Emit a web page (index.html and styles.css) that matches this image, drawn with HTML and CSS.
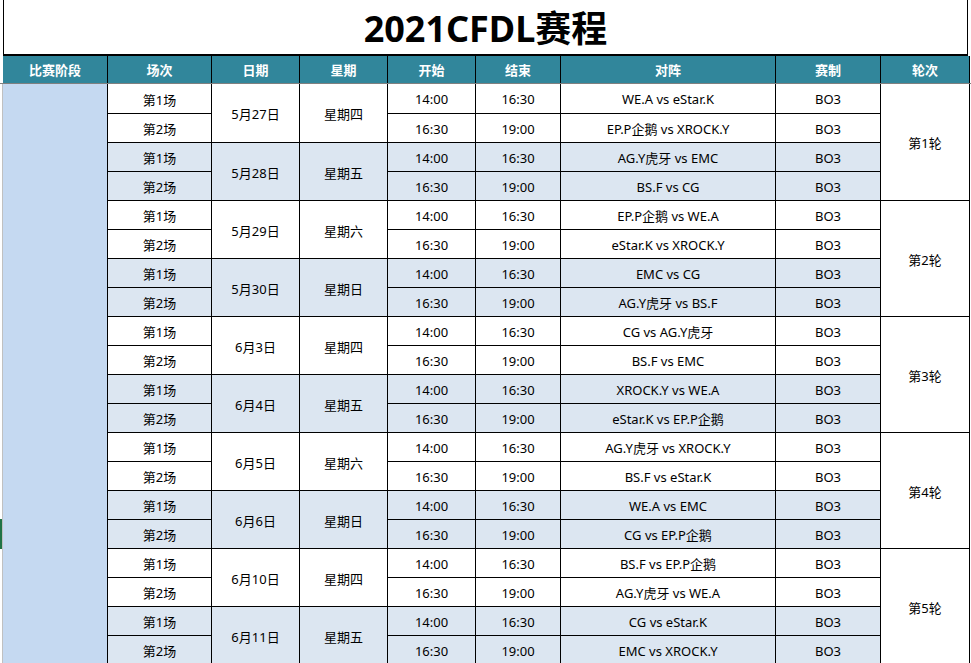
FILE: index.html
```html
<!DOCTYPE html>
<html lang="zh-CN">
<head>
<meta charset="utf-8">
<title>2021CFDL赛程</title>
<link rel="stylesheet" href="styles.css">
</head>
<body>
<div class="page">
  <div class="title-row">
    <div class="title">2021CFDL赛程</div>
  </div>
  <div class="head-row">
    <div class="head">
      <div class="h">比赛阶段</div>
      <div class="h">场次</div>
      <div class="h">日期</div>
      <div class="h">星期</div>
      <div class="h">开始</div>
      <div class="h">结束</div>
      <div class="h">对阵</div>
      <div class="h">赛制</div>
      <div class="h">轮次</div>
    </div>
  </div>
  <div class="body-row">
    <div class="gutter"><div class="sel"></div></div>
    <div class="grid">
      <div class="stage"></div>

      <div class="c g">第1场</div><div class="c d">5月27日</div><div class="c w">星期四</div><div class="c s">14:00</div><div class="c e">16:30</div><div class="c m">WE.A vs eStar.K</div><div class="c f">BO3</div><div class="c r">第1轮</div>
      <div class="c g">第2场</div><div class="c s">16:30</div><div class="c e">19:00</div><div class="c m">EP.P企鹅 vs XROCK.Y</div><div class="c f">BO3</div>

      <div class="c g b">第1场</div><div class="c d b">5月28日</div><div class="c w b">星期五</div><div class="c s b">14:00</div><div class="c e b">16:30</div><div class="c m b">AG.Y虎牙 vs EMC</div><div class="c f b">BO3</div>
      <div class="c g b">第2场</div><div class="c s b">16:30</div><div class="c e b">19:00</div><div class="c m b">BS.F vs CG</div><div class="c f b">BO3</div>

      <div class="c g">第1场</div><div class="c d">5月29日</div><div class="c w">星期六</div><div class="c s">14:00</div><div class="c e">16:30</div><div class="c m">EP.P企鹅 vs WE.A</div><div class="c f">BO3</div><div class="c r">第2轮</div>
      <div class="c g">第2场</div><div class="c s">16:30</div><div class="c e">19:00</div><div class="c m">eStar.K vs XROCK.Y</div><div class="c f">BO3</div>

      <div class="c g b">第1场</div><div class="c d b">5月30日</div><div class="c w b">星期日</div><div class="c s b">14:00</div><div class="c e b">16:30</div><div class="c m b">EMC vs CG</div><div class="c f b">BO3</div>
      <div class="c g b">第2场</div><div class="c s b">16:30</div><div class="c e b">19:00</div><div class="c m b">AG.Y虎牙 vs BS.F</div><div class="c f b">BO3</div>

      <div class="c g">第1场</div><div class="c d">6月3日</div><div class="c w">星期四</div><div class="c s">14:00</div><div class="c e">16:30</div><div class="c m">CG vs AG.Y虎牙</div><div class="c f">BO3</div><div class="c r">第3轮</div>
      <div class="c g">第2场</div><div class="c s">16:30</div><div class="c e">19:00</div><div class="c m">BS.F vs EMC</div><div class="c f">BO3</div>

      <div class="c g b">第1场</div><div class="c d b">6月4日</div><div class="c w b">星期五</div><div class="c s b">14:00</div><div class="c e b">16:30</div><div class="c m b">XROCK.Y vs WE.A</div><div class="c f b">BO3</div>
      <div class="c g b">第2场</div><div class="c s b">16:30</div><div class="c e b">19:00</div><div class="c m b">eStar.K vs EP.P企鹅</div><div class="c f b">BO3</div>

      <div class="c g">第1场</div><div class="c d">6月5日</div><div class="c w">星期六</div><div class="c s">14:00</div><div class="c e">16:30</div><div class="c m">AG.Y虎牙 vs XROCK.Y</div><div class="c f">BO3</div><div class="c r">第4轮</div>
      <div class="c g">第2场</div><div class="c s">16:30</div><div class="c e">19:00</div><div class="c m">BS.F vs eStar.K</div><div class="c f">BO3</div>

      <div class="c g b">第1场</div><div class="c d b">6月6日</div><div class="c w b">星期日</div><div class="c s b">14:00</div><div class="c e b">16:30</div><div class="c m b">WE.A vs EMC</div><div class="c f b">BO3</div>
      <div class="c g b">第2场</div><div class="c s b">16:30</div><div class="c e b">19:00</div><div class="c m b">CG vs EP.P企鹅</div><div class="c f b">BO3</div>

      <div class="c g">第1场</div><div class="c d">6月10日</div><div class="c w">星期四</div><div class="c s">14:00</div><div class="c e">16:30</div><div class="c m">BS.F vs EP.P企鹅</div><div class="c f">BO3</div><div class="c r">第5轮</div>
      <div class="c g">第2场</div><div class="c s">16:30</div><div class="c e">19:00</div><div class="c m">AG.Y虎牙 vs WE.A</div><div class="c f">BO3</div>

      <div class="c g b">第1场</div><div class="c d b">6月11日</div><div class="c w b">星期五</div><div class="c s b">14:00</div><div class="c e b">16:30</div><div class="c m b">CG vs eStar.K</div><div class="c f b">BO3</div>
      <div class="c g b">第2场</div><div class="c s b">16:30</div><div class="c e b">19:00</div><div class="c m b">EMC vs XROCK.Y</div><div class="c f b">BO3</div>
    </div>
  </div>
</div>
</body>
</html>
```

FILE: styles.css
```css
html, body {
  margin: 0;
  padding: 0;
  background: #ffffff;
}
body {
  width: 971px;
  height: 663px;
  overflow: hidden;
  font-family: "Noto Sans", "Noto Sans CJK SC", sans-serif;
  color: #000;
}
.page {
  display: flex;
  flex-direction: column;
}
.title-row {
  padding-left: 3px;
}
.title {
  width: 965px;
  height: 56px;
  border-left: 1px solid #000;
  border-right: 1px solid #000;
  border-bottom: 2px solid #000;
  display: flex;
  align-items: center;
  justify-content: center;
  font-family: "Noto Sans", "Noto Sans CJK SC", sans-serif;
  font-weight: 700;
  font-size: 36px;
  line-height: 1;
  padding-top: 4px;
  box-sizing: border-box;
}
.head-row {
  padding-left: 3px;
  border-bottom: 1px solid #808080;
}
.head {
  display: grid;
  grid-template-columns: 104px 103px 87px 87px 87px 84px 214px 104px 88px;
  column-gap: 1px;
  background: #000;
  width: 966px;
  border-right: 1px solid #000;
  height: 27px;
}
.h {
  background: #31869b;
  color: #fff;
  font-weight: 700;
  font-size: 13px;
  display: flex;
  align-items: center;
  justify-content: center;
  font-family: "Noto Sans CJK SC", sans-serif;
}
.body-row {
  display: flex;
}
.gutter {
  width: 2px;
  border-right: 1px solid #c0c0c0;
  flex: none;
}
.sel {
  height: 30px;
  margin-top: 435px;
  background: #217346;
}
.grid {
  display: grid;
  grid-template-columns: 104px 103px 87px 87px 87px 84px 214px 104px 88px;
  grid-template-rows: 29px repeat(19, 28px);
  gap: 1px;
  background: #000;
  width: 966px;
  border-right: 1px solid #000;
}
.stage {
  grid-column: 1;
  grid-row: 1 / span 20;
  background: #c5d9f1;
}
.c {
  background: #fff;
  font-size: 13px;
  display: flex;
  align-items: center;
  justify-content: center;
  padding-top: 1px;
  box-sizing: border-box;
  white-space: nowrap;
}
.c.b {
  background: #dce6f1;
}
.g { grid-column: 2; }
.d { grid-column: 3; grid-row: span 2; }
.w { grid-column: 4; grid-row: span 2; }
.s { grid-column: 5; }
.e { grid-column: 6; }
.m { grid-column: 7; }
.f { grid-column: 8; }
.r { grid-column: 9; grid-row: span 4; }
```
